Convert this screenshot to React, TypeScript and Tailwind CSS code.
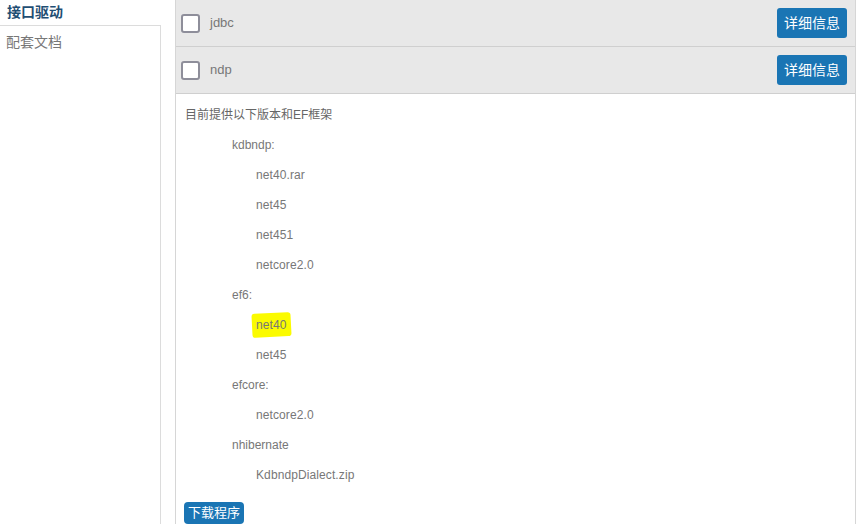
const versions: { name: string; items: string[] }[] = [
  { name: "kdbndp:", items: ["net40.rar", "net45", "net451", "netcore2.0"] },
  { name: "ef6:", items: ["net40", "net45"] },
  { name: "efcore:", items: ["netcore2.0"] },
  { name: "nhibernate", items: ["KdbndpDialect.zip"] },
];

const DriverRow = ({ label }: { label: string }) => (
  <div className="flex h-[47px] shrink-0 items-center border-b border-[#cfcfcf] bg-[#e8e8e8] pl-[5px] pr-[8px]">
    <span className="box-border h-[19px] w-[19px] rounded-[3px] border-2 border-[#8e8e9a] bg-white"></span>
    <span className="ml-[10px] text-[13px] text-[#777]">{label}</span>
    <button className="ml-auto h-[30px] rounded-[3px] bg-[#1a75b4] px-[7px] text-[14px] text-white">
      详细信息
    </button>
  </div>
);

export default function App() {
  return (
    <div
      className="flex h-[524px] w-[868px] overflow-hidden bg-white"
      style={{ fontFamily: '"Liberation Sans", Arial, "Noto Sans CJK SC", sans-serif' }}
    >
      <aside className="flex w-[161px] shrink-0 flex-col">
        <div className="h-[25px] pl-[7px] pt-[2px] text-[14px] font-bold text-[#1f4e73]">
          接口驱动
        </div>
        <div className="flex-1 border-r border-t border-[#dcdcdc] pl-[6px] pt-[6px] text-[14px] text-[#777]">
          配套文档
        </div>
      </aside>
      <main className="ml-[14px] flex w-[681px] flex-col border-x border-[#d6d6d6]">
        <DriverRow label="jdbc" />
        <DriverRow label="ndp" />
        <div className="shrink-0 pl-[9px] pt-[13px] text-[12px] text-[#777]">
          <div className="leading-[16px] text-[#666]">目前提供以下版本和EF框架</div>
          {versions.map((v) => (
            <div key={v.name}>
              <div className="mt-[14px] pl-[47px] leading-[16px]">{v.name}</div>
              {v.items.map((it) => (
                <div key={it} className="mt-[14px] pl-[71px] leading-[16px] tracking-[0.1px]">
                  {v.name === "ef6:" && it === "net40" ? (
                    <span className="relative">
                      <span className="absolute -inset-x-[4px] -inset-y-[5px] -rotate-3 rounded-[3px] bg-[#fbfb00]"></span>
                      <span className="relative">{it}</span>
                    </span>
                  ) : (
                    it
                  )}
                </div>
              ))}
            </div>
          ))}
          <button className="-ml-px mt-[19px] h-[22px] rounded-[4px] bg-[#1a75b4] px-[4px] text-[13px] text-white">
            下载程序
          </button>
        </div>
      </main>
    </div>
  );
}
